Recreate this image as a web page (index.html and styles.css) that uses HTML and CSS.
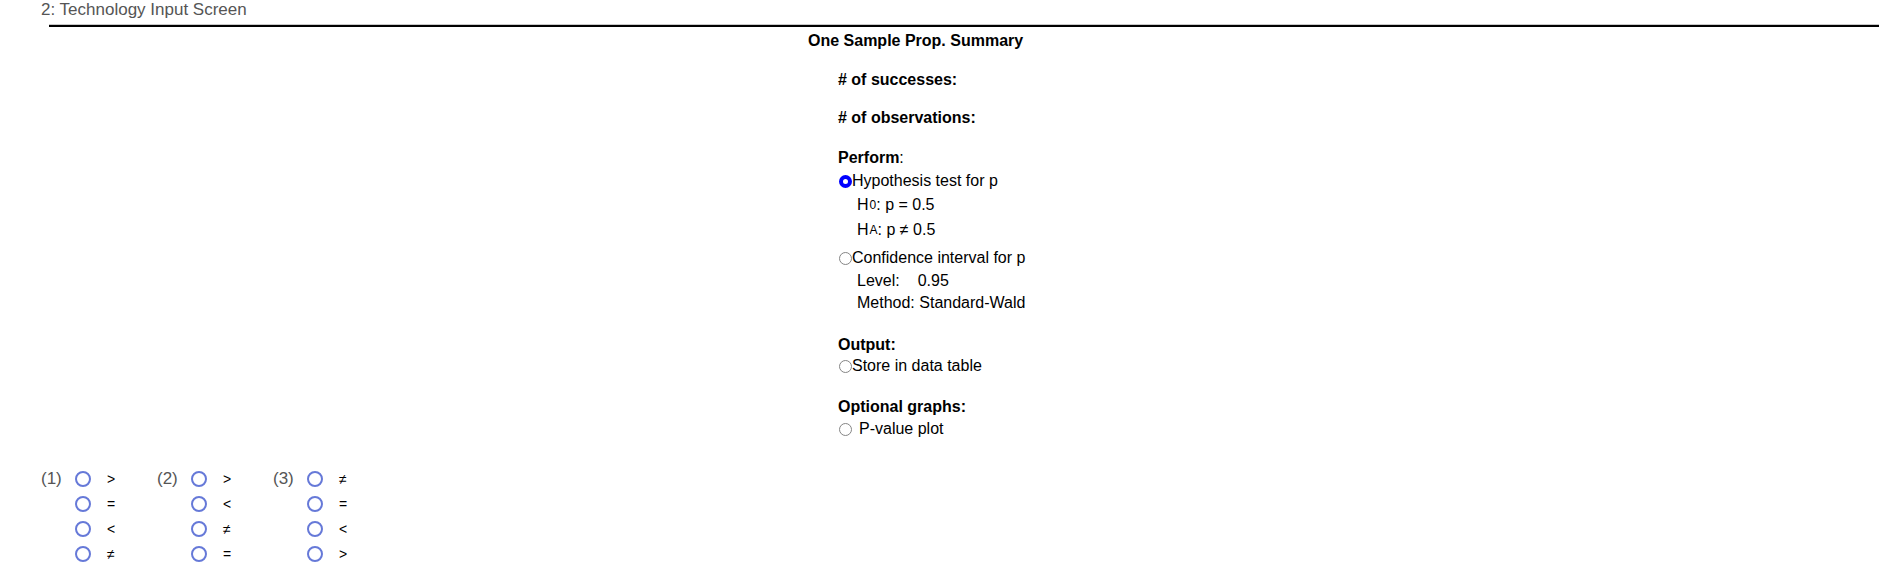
FILE: index.html
```html
<!DOCTYPE html>
<html>
<head>
<meta charset="utf-8">
<title>Technology Input Screen</title>
<link rel="stylesheet" href="styles.css">
</head>
<body>
<header class="screen-title">2: Technology Input Screen</header>
<div class="rule"></div>

<section class="summary">
  <div class="row title">One Sample Prop. Summary</div>
  <div class="fields">
    <div class="row bold m19"># of successes:</div>
    <div class="row bold m18"># of observations:</div>

    <div class="row m20"><b>Perform</b>:</div>
    <div class="row m3"><span class="radio on"></span>Hypothesis test for p</div>
    <div class="row m4 ind">H<sub>0</sub>: p = 0.5</div>
    <div class="row m5 ind">H<sub>A</sub>: p ≠ 0.5</div>
    <div class="row m8"><span class="radio"></span>Confidence interval for p</div>
    <div class="row m3 ind">Level:<span class="val">0.95</span></div>
    <div class="row m2 ind">Method: Standard-Wald</div>

    <div class="row bold m22">Output:</div>
    <div class="row m1"><span class="radio"></span>Store in data table</div>

    <div class="row bold m21">Optional graphs:</div>
    <div class="row m2"><span class="radio spaced"></span>P-value plot</div>
  </div>
</section>

<section class="choices">
  <div class="group">
    <span class="num">(1)</span>
    <div class="opts">
      <div class="opt"><span class="circle"></span><span class="sym">&gt;</span></div>
      <div class="opt"><span class="circle"></span><span class="sym">=</span></div>
      <div class="opt"><span class="circle"></span><span class="sym">&lt;</span></div>
      <div class="opt"><span class="circle"></span><span class="sym">≠</span></div>
    </div>
  </div>
  <div class="group">
    <span class="num">(2)</span>
    <div class="opts">
      <div class="opt"><span class="circle"></span><span class="sym">&gt;</span></div>
      <div class="opt"><span class="circle"></span><span class="sym">&lt;</span></div>
      <div class="opt"><span class="circle"></span><span class="sym">≠</span></div>
      <div class="opt"><span class="circle"></span><span class="sym">=</span></div>
    </div>
  </div>
  <div class="group">
    <span class="num">(3)</span>
    <div class="opts">
      <div class="opt"><span class="circle"></span><span class="sym">≠</span></div>
      <div class="opt"><span class="circle"></span><span class="sym">=</span></div>
      <div class="opt"><span class="circle"></span><span class="sym">&lt;</span></div>
      <div class="opt"><span class="circle"></span><span class="sym">&gt;</span></div>
    </div>
  </div>
</section>
</body>
</html>
```

FILE: styles.css
```css
html, body {
  margin: 0;
  padding: 0;
  background: #fff;
}

body {
  font-family: "Liberation Sans", Arial, sans-serif;
  font-size: 16px;
  color: #000;
  width: 1898px;
  height: 576px;
  overflow: hidden;
}

.screen-title {
  height: 24px;
  padding-left: 41px;
  font-size: 17px;
  line-height: 20px;
  color: #555;
}

.rule {
  margin-left: 49px;
  width: 1830px;
  height: 0;
  border-top: 1px solid #c8c8c8;
  border-bottom: 2px solid #000;
}

.summary {
  padding-left: 808px;
  margin-top: 4px;
}

.row {
  height: 20px;
  line-height: 20px;
  display: flex;
  align-items: center;
  white-space: nowrap;
}

.title {
  font-weight: bold;
}

.fields {
  padding-left: 30px;
}

.bold {
  font-weight: bold;
}

.m1 { margin-top: 1px; }
.m2 { margin-top: 2px; }
.m3 { margin-top: 3px; }
.m4 { margin-top: 4px; }
.m5 { margin-top: 5px; }
.m8 { margin-top: 8px; }
.m18 { margin-top: 18px; }
.m19 { margin-top: 19px; }
.m20 { margin-top: 20px; }
.m21 { margin-top: 21px; }
.m22 { margin-top: 22px; }

.ind {
  padding-left: 19px;
}

sub {
  font-size: 12px;
  line-height: 0;
  vertical-align: -5px;
  margin-left: 1px;
}

.val {
  margin-left: 18px;
}

.radio {
  box-sizing: border-box;
  width: 13px;
  height: 13px;
  border-radius: 50%;
  border: 1px solid #858585;
  margin-left: 1px;
  flex: none;
}

.radio.on {
  border: 4px solid #0000ff;
  background: #fff;
}

.radio.spaced {
  margin-right: 7px;
}

.choices {
  margin-top: 30px;
  padding-left: 41px;
  display: flex;
}

.group {
  display: flex;
  width: 116px;
}

.num {
  width: 34px;
  height: 20px;
  line-height: 20px;
  color: #555;
  font-size: 17px;
}

.opts {
  display: flex;
  flex-direction: column;
  gap: 5px;
}

.opt {
  height: 20px;
  display: flex;
  align-items: center;
}

.circle {
  box-sizing: border-box;
  width: 16px;
  height: 16px;
  border-radius: 50%;
  border: 2px solid #6679d8;
  flex: none;
}

.sym {
  margin-left: 16px;
  font-size: 14px;
  color: #000;
}
```
